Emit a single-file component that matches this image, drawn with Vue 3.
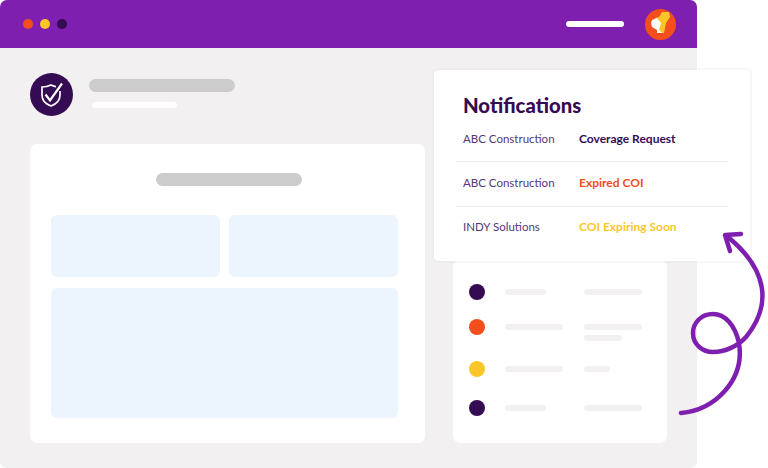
<script setup>
const rows = [
  { name: 'ABC Construction', status: 'Coverage Request', tone: 'dark' },
  { name: 'ABC Construction', status: 'Expired COI', tone: 'red' },
  { name: 'INDY Solutions', status: 'COI Expiring Soon', tone: 'yellow' },
]
const items = [
  { dot: 'dark', a: 41, b: [58] },
  { dot: 'red', a: 58, b: [58, 38] },
  { dot: 'yellow', a: 58, b: [26] },
  { dot: 'dark', a: 41, b: [58] },
]
</script>

<template>
  <div class="stage">
    <div class="window">
      <header class="titlebar">
        <div class="lights">
          <span class="light red"></span>
          <span class="light yellow"></span>
          <span class="light dark"></span>
        </div>
        <div class="user">
          <span class="user-bar"></span>
          <svg class="avatar" width="31" height="31" viewBox="0 0 31 31">
            <circle cx="15.5" cy="15.5" r="15.5" fill="#f34e1c" />
            <path d="M24 3 L17 3 L14 8 L10 9 L14 24 L19 24 L21 14 L25 8 Z" fill="#fbc62a" />
            <path d="M7 11 L12 9 L16 14 L14 21 L17 24 L12 24 L12 21 L7 18 L6 14 Z" fill="#fff" />
          </svg>
        </div>
      </header>
      <div class="body">
        <div class="heading">
          <svg class="badge" width="43" height="43" viewBox="0 0 43 43">
            <circle cx="21.5" cy="21.5" r="21.5" fill="#350c54" />
            <path d="M26 13.6 C24.5 13.5 23 13 21 12 C18 13.5 15 14 12 14 L12 22 C12 27 15.5 31 21 33 C26.5 31 30 27 30 22 L30 18" fill="none" stroke="#fff" stroke-width="1.7" />
            <path d="M15.5 21.5 L20 27.5 L32 10.5" fill="none" stroke="#fff" stroke-width="2.2" />
          </svg>
          <div class="heading-bars">
            <span class="bar-title"></span>
            <span class="bar-sub"></span>
          </div>
        </div>
        <div class="columns">
          <section class="main-card">
            <span class="card-title"></span>
            <div class="tiles">
              <div class="tile"></div>
              <div class="tile"></div>
              <div class="tile wide"></div>
            </div>
          </section>
          <section class="side-card">
            <div v-for="(item, i) in items" :key="i" class="item">
              <span class="dot" :class="item.dot"></span>
              <span class="line" :style="{ width: item.a + 'px' }"></span>
              <div class="lines">
                <span v-for="(w, j) in item.b" :key="j" class="line" :style="{ width: w + 'px' }"></span>
              </div>
            </div>
          </section>
        </div>
      </div>
    </div>

    <aside class="notifications">
      <h2>Notifications</h2>
      <div v-for="(row, i) in rows" :key="i" class="row">
        <span class="name">{{ row.name }}</span>
        <strong class="status" :class="row.tone">{{ row.status }}</strong>
      </div>
    </aside>

    <svg class="arrow" width="768" height="468" viewBox="0 0 768 468" fill="none" stroke="#7f1fb0" stroke-width="4.5" stroke-linecap="round" stroke-linejoin="round">
      <path d="M681 413 C715 410 745 380 739 343 C735 325 725 314 713 314 C701 314 693 323 693 333 C693 345 703 352 713 352 C725 352 738 346 746 337 C772 305 768 270 728 237" />
      <path d="M741 234 L725 235 L730 251" />
    </svg>
  </div>
</template>

<style>
html, body { margin: 0; background: #fff; }
</style>

<style scoped>
.stage {
  position: relative;
  width: 768px;
  height: 468px;
  overflow: hidden;
  background: #fff;
  font-family: Lato, "Liberation Sans", sans-serif;
}
.window {
  width: 697px;
  height: 468px;
  display: flex;
  flex-direction: column;
  background: #f2f0f1;
  border-radius: 7px;
  overflow: hidden;
}
.titlebar {
  height: 48px;
  flex: none;
  display: flex;
  align-items: center;
  justify-content: space-between;
  padding: 0 21px 0 23px;
  background: #7f1fb0;
}
.lights { display: flex; gap: 7px; }
.light { width: 10px; height: 10px; border-radius: 50%; }
.light.red { background: #f34e1c; }
.light.yellow { background: #fbc62a; }
.light.dark { background: #350c54; }
.user { display: flex; align-items: center; gap: 21px; }
.user-bar { width: 58px; height: 6px; background: #fff; border-radius: 3px; }
.avatar { display: block; }
.body {
  flex: 1;
  padding: 25px 30px 25px;
  display: flex;
  flex-direction: column;
  gap: 28px;
}
.heading { display: flex; gap: 16px; height: 43px; }
.badge { flex: none; }
.heading-bars { display: flex; flex-direction: column; padding-top: 6px; gap: 10px; }
.bar-title { width: 146px; height: 13px; border-radius: 7px; background: #ccc; }
.bar-sub { width: 85px; height: 6px; margin-left: 3px; border-radius: 3px; background: #fff; }
.columns { flex: 1; display: flex; gap: 28px; }
.main-card {
  width: 395px;
  background: #fff;
  border-radius: 7px;
  padding: 29px 27px 25px 21px;
  box-sizing: border-box;
  display: flex;
  flex-direction: column;
  gap: 29px;
}
.card-title { flex: none; width: 146px; height: 13px; border-radius: 7px; background: #ccc; margin-left: 105px; }
.tiles {
  flex: 1;
  display: grid;
  grid-template-columns: 169px 169px;
  grid-template-rows: 62px 1fr;
  gap: 11px 9px;
}
.tile { background: #ecf4fe; border-radius: 6px; }
.tile.wide { grid-column: 1 / 3; }
.side-card {
  width: 214px;
  background: #fff;
  border-radius: 7px;
  align-self: flex-end;
  height: 183px;
  box-sizing: border-box;
  padding: 24px 25px 0 16px;
  display: flex;
  flex-direction: column;
}
.item {
  display: flex;
  align-items: flex-start;
  height: 39px;
}
.item:nth-child(1) { height: 35px; }
.item:nth-child(2) { height: 42px; }
.dot { width: 16px; height: 16px; border-radius: 50%; margin: 0 20px 0 0; flex: none; }
.dot.dark { background: #350c54; }
.dot.red { background: #f34e1c; }
.dot.yellow { background: #fbc62a; }
.line { display: block; height: 6px; border-radius: 3px; background: #f2f0f1; margin-top: 5px; }
.item > .line { margin-right: auto; }
.lines { width: 58px; display: flex; flex-direction: column; gap: 5px; flex: none; }
.lines .line + .line { margin-top: 0; }
.notifications {
  position: absolute;
  left: 434px;
  top: 70px;
  width: 316px;
  height: 191px;
  box-sizing: border-box;
  padding: 23px 22px 0;
  background: #fff;
  border-radius: 4px;
  box-shadow: 0 0 2px rgba(53, 12, 84, 0.1);
  outline: 1px dotted #eeecf3;
  outline-offset: 1px;
  color: #350c54;
}
h2 {
  margin: 0 0 0 7px;
  font-size: 20.3px;
  line-height: 24px;
  font-weight: 900;
}
.row {
  display: flex;
  align-items: center;
  box-sizing: border-box;
  height: 45px;
  padding: 0 0 1px 7px;
  font-size: 11.5px;
  border-bottom: 1px solid #f2f0f1;
}
.row:nth-child(n + 3) { padding-bottom: 3px; }
.row:last-child { border-bottom: 0; height: 41px; }
.name { width: 116px; color: #563878; }
.status { font-weight: 700; font-size: 12px; }
.status.dark { color: #350c54; }
.status.red { color: #f34e1c; }
.status.yellow { color: #fbc62a; }
.arrow { position: absolute; left: 0; top: 0; pointer-events: none; }
</style>
